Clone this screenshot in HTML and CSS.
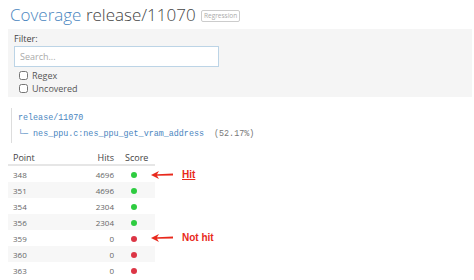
FILE: index.html
```html
<!DOCTYPE html>
<html lang="en">
  <head>
    <meta charset="UTF-8" />
    <title>Coverage release/11070</title>
    <link rel="stylesheet" href="styles.css">
  </head>
  <body>
    <h1 class="title">
      <span class="title-blue">Coverage</span> release/11070
      <span class="badge">Regression</span>
    </h1>

    <div class="filter">
      <label class="filter-label" for="search">Filter:</label>
      <input type="text" id="search" class="search" placeholder="Search..." />
      <label class="check"><input type="checkbox" /> Regex</label>
      <label class="check"><input type="checkbox" /> Uncovered</label>
    </div>

    <div class="crumbs">
      <div class="crumb-link">release/11070</div>
      <div class="crumb-sub"><span class="crumb-link">&#x2514;&#x2500; nes_ppu.c:nes_ppu_get_vram_address</span>  <span class="pct">(52.17%)</span></div>
    </div>

    <div class="table-wrap">
      <table class="points">
        <colgroup>
          <col class="w-point" />
          <col class="w-hits" />
          <col class="w-score" />
        </colgroup>
        <thead>
          <tr>
            <th>Point</th>
            <th class="col-hits">Hits</th>
            <th class="col-score">Score</th>
          </tr>
        </thead>
        <tbody>
          <tr><td>348</td><td class="col-hits">4696</td><td class="col-score"><span class="dot hit"></span></td></tr>
          <tr><td>351</td><td class="col-hits">4696</td><td class="col-score"><span class="dot hit"></span></td></tr>
          <tr><td>354</td><td class="col-hits">2304</td><td class="col-score"><span class="dot hit"></span></td></tr>
          <tr><td>356</td><td class="col-hits">2304</td><td class="col-score"><span class="dot hit"></span></td></tr>
          <tr><td>359</td><td class="col-hits">0</td><td class="col-score"><span class="dot miss"></span></td></tr>
          <tr><td>360</td><td class="col-hits">0</td><td class="col-score"><span class="dot miss"></span></td></tr>
          <tr><td>363</td><td class="col-hits">0</td><td class="col-score"><span class="dot miss"></span></td></tr>
        </tbody>
      </table>

      <div class="note note-hit">
        <svg width="24" height="10" viewBox="0 0 24 10"><path d="M1 5 L9 1 L7 4.3 L23 3.5 L23 5.5 L7 5.8 L9 9 Z" fill="#e8291c"/></svg>
        <span class="note-text underline">Hit</span>
      </div>
      <div class="note note-miss">
        <svg width="24" height="10" viewBox="0 0 24 10"><path d="M1 5 L9 1 L7 4.3 L23 3.5 L23 5.5 L7 5.8 L9 9 Z" fill="#e8291c"/></svg>
        <span class="note-text">Not hit</span>
      </div>
    </div>
  </body>
</html>
```

FILE: styles.css
```css
body {
  font-family: "Open Sans", sans-serif;
  margin: 0;
  padding: 0 2px 0 8px;
  background-color: #fff;
  color: #555;
  font-size: 10px;
}
.title {
  margin: 0;
  padding: 3px 0 0 2px;
  height: 26px;
  font-size: 17px;
  font-weight: 300;
  color: #444;
  line-height: 24px;
  white-space: nowrap;
}
.title-blue {
  color: #4a86c0;
}
.badge {
  display: inline-block;
  vertical-align: 3px;
  margin-left: 1px;
  font-size: 6.5px;
  font-weight: 400;
  line-height: 10px;
  padding: 0 2px;
  border: 1px solid #ccc;
  border-radius: 2px;
  color: #aaa;
}
.filter {
  background-color: #f5f5f5;
  padding: 4px 6px 4px;
  height: 60px;
}
.filter-label {
  display: block;
  color: #444;
  font-size: 9px;
  line-height: 12px;
}
.search {
  display: block;
  width: 205px;
  height: 21px;
  box-sizing: border-box;
  margin: 1px 0 2px;
  padding: 0 5px;
  border: 1px solid #bcd4e6;
  background: #fff;
  font-family: "Open Sans", sans-serif;
  font-size: 9px;
}
.search::placeholder {
  color: #aaa;
}
.check {
  display: flex;
  align-items: center;
  gap: 4px;
  font-size: 9px;
  line-height: 13px;
  color: #555;
  padding-left: 5px;
}
.check input {
  margin: 0;
  width: 9px;
  height: 9px;
}
.crumbs {
  margin: 11px 0 0 3px;
  border-left: 1px solid #ddd;
  padding: 2px 0 1px 6px;
  font-family: "Liberation Mono", monospace;
  font-size: 8.4px;
  line-height: 16px;
}
.crumb-link {
  color: #4a86c0;
}
.crumb-sub {
  white-space: pre;
}
.pct {
  color: #777;
}
.table-wrap {
  position: relative;
  margin-top: 6px;
}
.points {
  border-collapse: collapse;
  table-layout: fixed;
  width: 147px;
}
.w-point {
  width: 55px;
}
.w-hits {
  width: 56px;
}
.w-score {
  width: 36px;
}
.points th {
  text-align: left;
  font-weight: 400;
  color: #444;
  font-size: 9px;
  padding: 2px 5px 0;
  height: 13px;
  border-bottom: 2px solid #e6e6e6;
}
.points td {
  height: 16px;
  padding: 0 5px;
  font-size: 8px;
  color: #666;
}
.points tbody tr:nth-child(even) {
  background-color: #f7f7f7;
}
.points .col-hits {
  text-align: right;
}
.points th.col-score {
  padding-left: 6px;
}
.points td.col-score {
  padding-left: 12px;
}
.dot {
  display: inline-block;
  width: 6px;
  height: 6px;
  border-radius: 50%;
  vertical-align: middle;
}
.dot.hit {
  background-color: #2ecc40;
}
.dot.miss {
  background-color: #dc3545;
}
.note {
  position: absolute;
  display: flex;
  align-items: center;
  gap: 8px;
}
.note-hit {
  left: 142px;
  top: 20px;
}
.note-miss {
  left: 142px;
  top: 83px;
}
.note-text {
  color: #e8291c;
  font-family: "Liberation Sans", Arial, sans-serif;
  font-weight: bold;
  font-size: 10px;
}
.underline {
  text-decoration: underline;
}
```
